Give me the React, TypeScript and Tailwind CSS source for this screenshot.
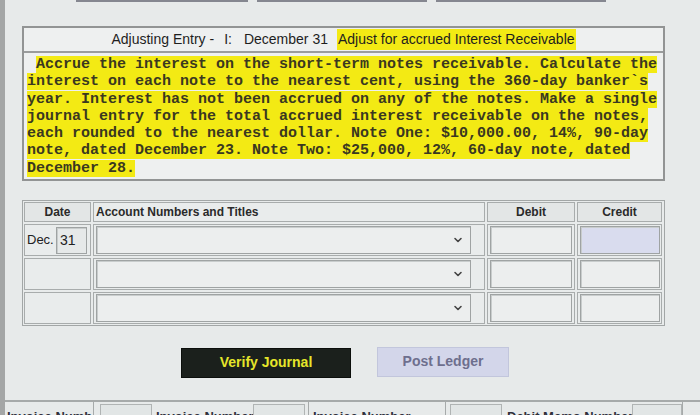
import React from "react";
import { ChevronDown } from "lucide-react";

const lines = [
  "interest on each note to the nearest cent, using the 360-day banker`s",
  "year. Interest has not been accrued on any of the notes. Make a single",
  "journal entry for the total accrued interest receivable on the notes,",
  "each rounded to the nearest dollar. Note One: $10,000.00, 14%, 90-day",
  "note, dated December 23. Note Two: $25,000, 12%, 60-day note, dated",
  "December 28.",
];

function Box({ className = "", children }: { className?: string; children?: React.ReactNode }) {
  return (
    <div className={"border border-[#9fa3a3] shadow-[inset_1px_1px_0_#c8cccc] " + className}>{children}</div>
  );
}

function Row({ first }: { first?: boolean }) {
  return (
    <div className="flex gap-[2px] h-[32px]">
      <div className="w-[67px] border border-[#a8acac] bg-[#e9ecec] flex items-center">
        {first && (
          <>
            <span className="text-[13px] text-[#222] pl-[2px] w-[31px]">Dec.</span>
            <Box className="w-[31px] h-[27px] bg-[#e6e9e9] flex items-center pl-[3px] text-[14px] text-[#222]">31</Box>
          </>
        )}
      </div>
      <div className="w-[392px] border border-[#a8acac] bg-[#e9ecec] flex items-center pl-[2px]">
        <Box className="w-[375px] h-[28px] bg-[#eceeee] flex items-center justify-end pr-[6px]">
          <ChevronDown size={12} strokeWidth={3.2} color="#444" />
        </Box>
      </div>
      <div className="w-[88px] border border-[#a8acac] bg-[#e9ecec] flex items-center justify-center">
        <Box className="w-[82px] h-[28px] bg-[#eceeee]" />
      </div>
      <div className="w-[85px] border border-[#a8acac] bg-[#e9ecec] flex items-center justify-center">
        <Box className={"w-[80px] h-[28px] " + (first ? "bg-[#d9dcee]" : "bg-[#eceeee]")} />
      </div>
    </div>
  );
}

export default function App() {
  return (
    <div
      className="w-[700px] h-[415px] overflow-hidden bg-[#e7eaea] flex flex-col relative border-l-[5px] border-[#a4a6a6]"
      style={{ fontFamily: '"Liberation Sans", Arial, sans-serif' }}
    >
      {/* top tab remnants */}
      <div className="h-[26px] flex gap-[9px] pl-[71px] shrink-0">
        <div className="w-[172px] h-[2px] bg-[#858790]" />
        <div className="w-[170px] h-[2px] bg-[#858790]" />
        <div className="w-[170px] h-[2px] bg-[#858790]" />
      </div>

      {/* instructions */}
      <div className="ml-[17px] w-[643px] h-[155px] border-2 border-[#929494] bg-[#eef0f0] flex flex-col shrink-0">
        <div className="h-[25px] border-b-2 border-[#9a9c9c] flex items-center justify-center text-[14px] text-[#1e1e1e] shrink-0">
          <span>Adjusting Entry -</span>
          <span className="ml-[10px]">I:</span>
          <span className="ml-[12px]">December 31</span>
          <span className="ml-[9px] bg-[#f3ea14] px-[1px]">Adjust for accrued Interest Receivable</span>
        </div>
        <div
          className="pl-[3px] pt-[3px] text-[15px] font-bold text-[#3a3820] leading-[17.3px] whitespace-pre"
          style={{ fontFamily: '"Liberation Mono", "Courier New", monospace' }}
        >
          <div>
            {" "}
            <span className="bg-[#f3ea14]">Accrue the interest on the short-term notes receivable. Calculate the</span>
          </div>
          {lines.map((l) => (
            <div key={l}>
              <span className="bg-[#f3ea14]">{l}</span>
            </div>
          ))}
        </div>
      </div>

      {/* journal table */}
      <div className="ml-[17px] mt-[19px] w-[643px] border border-[#a2a6a6] p-[1px] flex flex-col gap-[2px] shrink-0 bg-[#e8ebeb]">
        <div className="flex gap-[2px] h-[20px] text-[12px] font-bold text-[#2a2a2a]">
          <div className="w-[67px] border border-[#a8acac] bg-[#e3e6e6] flex items-center justify-center">Date</div>
          <div className="w-[392px] border border-[#a8acac] bg-[#e9ecec] flex items-center pl-[2px]">
            Account Numbers and Titles
          </div>
          <div className="w-[88px] border border-[#a8acac] bg-[#e3e6e6] flex items-center justify-center">Debit</div>
          <div className="w-[85px] border border-[#a8acac] bg-[#e3e6e6] flex items-center justify-center">Credit</div>
        </div>
        <Row first />
        <Row />
        <Row />
      </div>

      {/* buttons */}
      <div className="flex items-center mt-[21px] h-[31px] shrink-0">
        <button className="ml-[176px] w-[170px] h-[30px] bg-[#1b201c] border border-[#0c0f0c] text-[#e6e62a] text-[14px] font-bold">
          Verify Journal
        </button>
        <button className="ml-[26px] mb-[2px] w-[132px] h-[30px] bg-[#d3d6ea] border border-[#c2c6dc] text-[#6e6f8e] text-[14px] font-bold">
          Post Ledger
        </button>
      </div>

      {/* bottom cut-off row */}
      <div className="mt-[22px] border-t-2 border-[#a6aaaa] flex h-[20px] text-[13px] font-bold text-[#2f2f3a] shrink-0 whitespace-nowrap overflow-hidden">
        <div className="w-[89px] border-r border-[#a6aaaa] pl-[2px] pt-[8px] leading-none overflow-hidden">Invoice Number</div>
        <div className="ml-[6px] mt-[2px] w-[52px] h-[20px] border border-[#b0b4b4] bg-[#e2e6e6]" />
        <div className="pl-[4px] pt-[8px] leading-none w-[101px] overflow-hidden">Invoice Number</div>
        <div className="mt-[2px] w-[52px] h-[20px] border border-[#b0b4b4] bg-[#e2e6e6]" />
        <div className="ml-[3px] w-[138px] border-l border-r border-[#a6aaaa] pl-[4px] pt-[8px] leading-none overflow-hidden">Invoice Number</div>
        <div className="ml-[4px] mt-[2px] w-[52px] h-[20px] border border-[#b0b4b4] bg-[#e2e6e6]" />
        <div className="pl-[5px] pt-[8px] leading-none w-[130px] overflow-hidden">Debit Memo Number</div>
        <div className="mt-[2px] w-[50px] h-[20px] border border-[#b0b4b4] bg-[#e2e6e6]" />
        <div className="w-[1px] bg-[#a6aaaa]" />
      </div>
    </div>
  );
}
